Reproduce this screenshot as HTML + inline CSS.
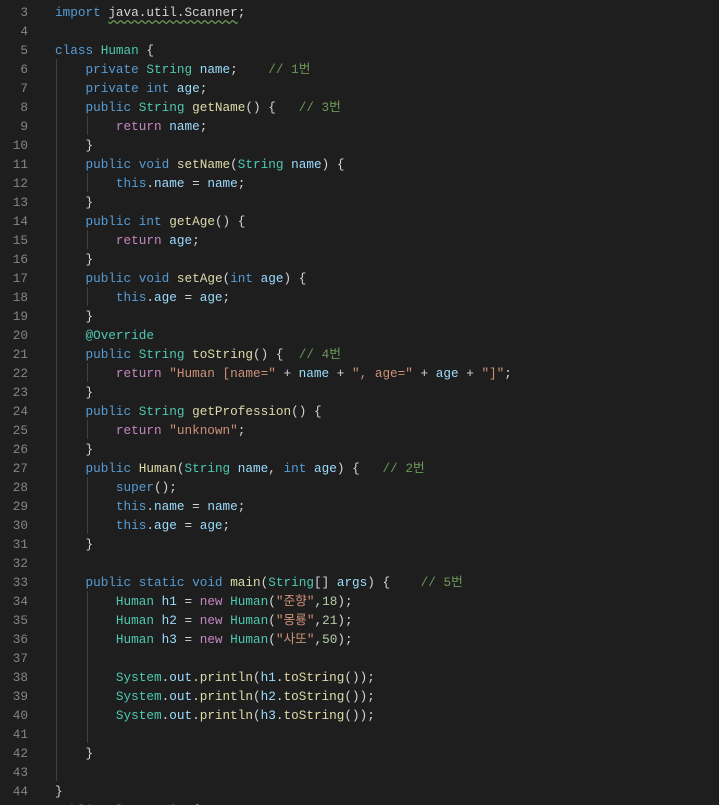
<!DOCTYPE html>
<html><head><meta charset="utf-8"><style>
html,body{margin:0;background:#1e1e1e;width:719px;height:805px;overflow:hidden;}
body{position:relative;font-family:"Liberation Mono","Noto Sans CJK KR",monospace;font-size:12.7px;}
.l{position:absolute;left:0;height:19px;line-height:19px;white-space:pre;color:#d4d4d4;}
.n{position:absolute;left:0;width:28px;text-align:right;color:#858585;}
.c{position:absolute;left:55px;}
.k{color:#569cd6}.t{color:#4ec9b0}.v{color:#9cdcfe}.f{color:#dcdcaa}.s{color:#ce9178}.m{color:#6a9955}.r{color:#c586c0}.d{color:#b5cea8}
.b1,.b2,.b3{color:#d4d4d4}
.g{position:absolute;width:1px;background:#404040}
.sq{text-decoration:underline wavy #6a9955;text-underline-offset:3px}
</style></head><body>
<div class="g" style="left:56px;top:59px;height:722px"></div>
<div class="g" style="left:87px;top:116px;height:19px"></div>
<div class="g" style="left:87px;top:173px;height:19px"></div>
<div class="g" style="left:87px;top:230px;height:19px"></div>
<div class="g" style="left:87px;top:287px;height:19px"></div>
<div class="g" style="left:87px;top:363px;height:19px"></div>
<div class="g" style="left:87px;top:420px;height:19px"></div>
<div class="g" style="left:87px;top:477px;height:57px"></div>
<div class="g" style="left:87px;top:591px;height:152px"></div>
<div id="code"></div>
<script>
const L=[
[3,'<span class="k">import</span> <span class="sq">java.util.Scanner</span>;'],
[4,''],
[5,'<span class="k">class</span> <span class="t">Human</span> <span class="b1">{</span>'],
[6,'    <span class="k">private</span> <span class="t">String</span> <span class="v">name</span>;    <span class="m">// 1번</span>'],
[7,'    <span class="k">private</span> <span class="k">int</span> <span class="v">age</span>;'],
[8,'    <span class="k">public</span> <span class="t">String</span> <span class="f">getName</span><span class="b2">()</span> <span class="b2">{</span>   <span class="m">// 3번</span>'],
[9,'        <span class="r">return</span> <span class="v">name</span>;'],
[10,'    <span class="b2">}</span>'],
[11,'    <span class="k">public</span> <span class="k">void</span> <span class="f">setName</span><span class="b2">(</span><span class="t">String</span> <span class="v">name</span><span class="b2">)</span> <span class="b2">{</span>'],
[12,'        <span class="k">this</span>.<span class="v">name</span> = <span class="v">name</span>;'],
[13,'    <span class="b2">}</span>'],
[14,'    <span class="k">public</span> <span class="k">int</span> <span class="f">getAge</span><span class="b2">()</span> <span class="b2">{</span>'],
[15,'        <span class="r">return</span> <span class="v">age</span>;'],
[16,'    <span class="b2">}</span>'],
[17,'    <span class="k">public</span> <span class="k">void</span> <span class="f">setAge</span><span class="b2">(</span><span class="k">int</span> <span class="v">age</span><span class="b2">)</span> <span class="b2">{</span>'],
[18,'        <span class="k">this</span>.<span class="v">age</span> = <span class="v">age</span>;'],
[19,'    <span class="b2">}</span>'],
[20,'    <span class="t">@Override</span>'],
[21,'    <span class="k">public</span> <span class="t">String</span> <span class="f">toString</span><span class="b2">()</span> <span class="b2">{</span>  <span class="m">// 4번</span>'],
[22,'        <span class="r">return</span> <span class="s">"Human [name="</span> + <span class="v">name</span> + <span class="s">", age="</span> + <span class="v">age</span> + <span class="s">"]"</span>;'],
[23,'    <span class="b2">}</span>'],
[24,'    <span class="k">public</span> <span class="t">String</span> <span class="f">getProfession</span><span class="b2">()</span> <span class="b2">{</span>'],
[25,'        <span class="r">return</span> <span class="s">"unknown"</span>;'],
[26,'    <span class="b2">}</span>'],
[27,'    <span class="k">public</span> <span class="f">Human</span><span class="b2">(</span><span class="t">String</span> <span class="v">name</span>, <span class="k">int</span> <span class="v">age</span><span class="b2">)</span> <span class="b2">{</span>   <span class="m">// 2번</span>'],
[28,'        <span class="k">super</span><span class="b3">()</span>;'],
[29,'        <span class="k">this</span>.<span class="v">name</span> = <span class="v">name</span>;'],
[30,'        <span class="k">this</span>.<span class="v">age</span> = <span class="v">age</span>;'],
[31,'    <span class="b2">}</span>'],
[32,''],
[33,'    <span class="k">public</span> <span class="k">static</span> <span class="k">void</span> <span class="f">main</span><span class="b2">(</span><span class="t">String</span><span class="b3">[]</span> <span class="v">args</span><span class="b2">)</span> <span class="b2">{</span>    <span class="m">// 5번</span>'],
[34,'        <span class="t">Human</span> <span class="v">h1</span> = <span class="r">new</span> <span class="t">Human</span><span class="b3">(</span><span class="s">"준향"</span>,<span class="d">18</span><span class="b3">)</span>;'],
[35,'        <span class="t">Human</span> <span class="v">h2</span> = <span class="r">new</span> <span class="t">Human</span><span class="b3">(</span><span class="s">"몽룡"</span>,<span class="d">21</span><span class="b3">)</span>;'],
[36,'        <span class="t">Human</span> <span class="v">h3</span> = <span class="r">new</span> <span class="t">Human</span><span class="b3">(</span><span class="s">"사또"</span>,<span class="d">50</span><span class="b3">)</span>;'],
[37,''],
[38,'        <span class="t">System</span>.<span class="v">out</span>.<span class="f">println</span><span class="b3">(</span><span class="v">h1</span>.<span class="f">toString</span><span class="b1">()</span><span class="b3">)</span>;'],
[39,'        <span class="t">System</span>.<span class="v">out</span>.<span class="f">println</span><span class="b3">(</span><span class="v">h2</span>.<span class="f">toString</span><span class="b1">()</span><span class="b3">)</span>;'],
[40,'        <span class="t">System</span>.<span class="v">out</span>.<span class="f">println</span><span class="b3">(</span><span class="v">h3</span>.<span class="f">toString</span><span class="b1">()</span><span class="b3">)</span>;'],
[41,''],
[42,'    <span class="b2">}</span>'],
[43,''],
[44,'<span class="b1">}</span>'],
[45,'<span class="k">public</span> <span class="k">class</span> <span class="t">Main</span> <span class="b1">{</span>']
];
let h='';
L.forEach((x,i)=>{h+='<div class="l" style="top:'+(3+i*19)+'px"><span class="n">'+(x[0]==45?'':x[0])+'</span><span class="c">'+x[1]+'</span></div>';});
document.getElementById('code').innerHTML=h;
</script>
</body></html>
